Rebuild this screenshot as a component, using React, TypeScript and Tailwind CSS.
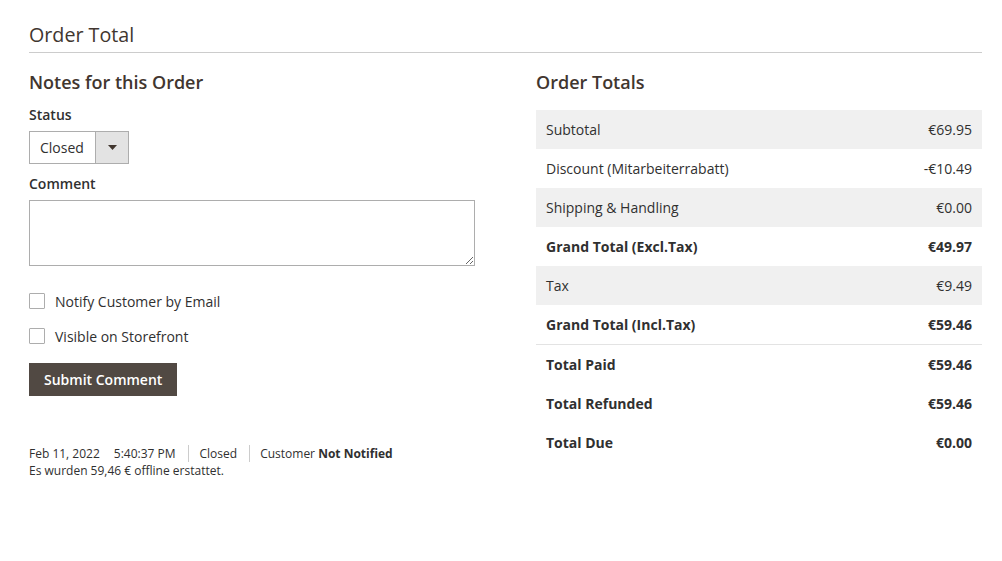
const totals = [
  { label: "Subtotal", value: "€69.95", shade: true },
  { label: "Discount (Mitarbeiterrabatt)", value: "-€10.49" },
  { label: "Shipping & Handling", value: "€0.00", shade: true },
  { label: "Grand Total (Excl.Tax)", value: "€49.97", strong: true },
  { label: "Tax", value: "€9.49", shade: true },
  { label: "Grand Total (Incl.Tax)", value: "€59.46", strong: true },
];

const paid = [
  { label: "Total Paid", value: "€59.46" },
  { label: "Total Refunded", value: "€59.46" },
  { label: "Total Due", value: "€0.00" },
];

function Check({ label }: { label: string }) {
  return (
    <label className="flex h-5 items-center">
      <span className="h-4 w-4 rounded-[1px] border border-[#adadad] bg-white" />
      <span className="ml-[10px] text-[14px]">{label}</span>
    </label>
  );
}

export default function App() {
  return (
    <div
      className="min-h-[561px] bg-white pl-[29px] pr-[20px] pt-[23px] text-[#303030]"
      style={{ fontFamily: '"Open Sans", "Liberation Sans", sans-serif' }}
    >
      <h1 className="border-b border-[#cccccc] pb-[5px] text-[19.7px] leading-6 text-[#41362f]">Order Total</h1>

      <div className="grid grid-cols-2 gap-[61px]">
        {/* notes */}
        <div>
          <h2 className="mt-[17px] text-[18px] font-semibold leading-6 text-[#41362f]">Notes for this Order</h2>

          <div className="mt-[11px] text-[14px] font-semibold leading-5">Status</div>
          <div className="mt-[6px] flex h-[33px] w-[100px] border border-[#adadad] text-[14px]">
            <div className="flex flex-1 items-center pl-[10px]">Closed</div>
            <div className="flex w-[33px] items-center justify-center border-l border-[#adadad] bg-[#e3e3e3]">
              <svg width="9" height="5" viewBox="0 0 9 5">
                <path d="M0 0h9L4.5 5z" fill="#41362f" />
              </svg>
            </div>
          </div>

          <div className="mt-[10px] text-[14px] font-semibold leading-5">Comment</div>
          <textarea className="mt-[6px] block h-[66px] w-full border border-[#adadad] bg-white" />

          <div className="mt-[25px]">
            <Check label="Notify Customer by Email" />
          </div>
          <div className="mt-[15px]">
            <Check label="Visible on Storefront" />
          </div>

          <button className="mt-[17px] flex h-[33px] items-center bg-[#514943] px-[15px] text-[14px] font-semibold text-white">
            Submit Comment
          </button>

          <div className="mt-[49px] text-[12px] leading-[17px]">
            <div className="flex items-center">
              <span>Feb 11, 2022</span>
              <span className="ml-[14px] pr-[12px]">5:40:37 PM</span>
              <span className="border-l border-[#cccccc] pl-[11px] pr-[12px]">Closed</span>
              <span className="border-l border-[#cccccc] pl-[10px]">
                Customer <b className="font-bold">Not Notified</b>
              </span>
            </div>
            <div>Es wurden 59,46 € offline erstattet.</div>
          </div>
        </div>

        {/* totals */}
        <div>
          <h2 className="mt-[17px] text-[18px] font-semibold leading-6 text-[#41362f]">Order Totals</h2>
          <div className="mt-4 text-[14px]">
            {totals.map((t) => (
              <div
                key={t.label}
                className={`flex h-[39px] items-center justify-between px-[10px] ${t.shade ? "bg-[#f0f0f0]" : ""} ${t.strong ? "font-bold" : ""}`}
              >
                <span>{t.label}</span>
                <span>{t.value}</span>
              </div>
            ))}
            <div className="border-t border-[#e3e3e3]">
              {paid.map((t) => (
                <div key={t.label} className="flex h-[39px] items-center justify-between px-[10px] font-bold">
                  <span>{t.label}</span>
                  <span>{t.value}</span>
                </div>
              ))}
            </div>
          </div>
        </div>
      </div>
    </div>
  );
}
